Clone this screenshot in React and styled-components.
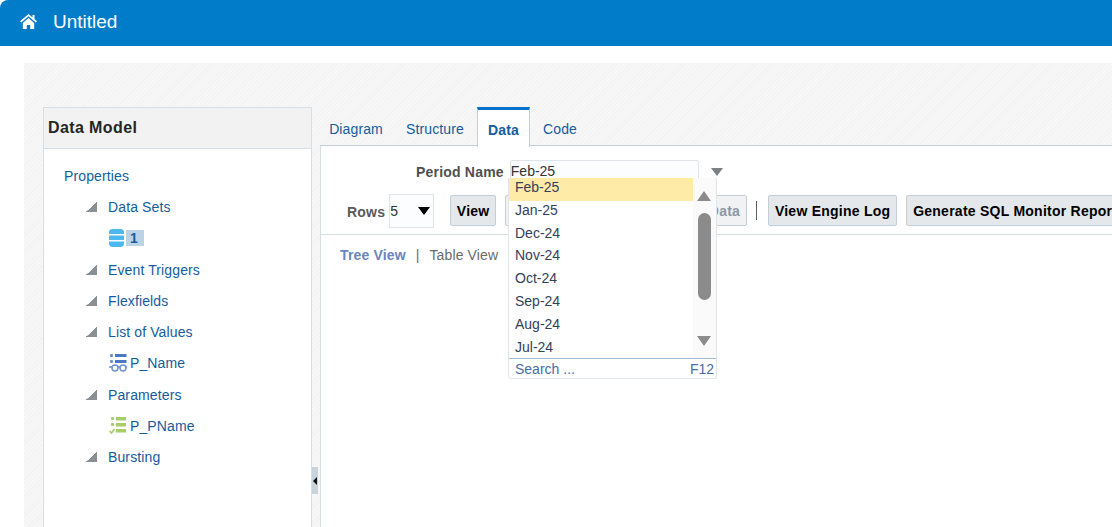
import React from 'react';
import styled, { createGlobalStyle } from 'styled-components';

const Global = createGlobalStyle`
  html, body { margin: 0; padding: 0; background: #fff; }
  body { font-family: "Liberation Sans", Arial, sans-serif; font-size: 14px; width: 1112px; height: 527px; overflow: hidden; }
  * { box-sizing: border-box; }
`;
const Page = styled.div`width: 1112px; height: 527px; overflow: hidden; display: flex; flex-direction: column;`;
const TopBar = styled.header`
  height: 46px; flex: none; background: #007cc8; border-top-left-radius: 8px;
  display: flex; align-items: center; padding: 0 0 3px 20px; gap: 16px; color: #fff;
`;
const Title = styled.span`font-size: 19px; line-height: 22px;`;
const Canvas = styled.div`flex: 1; min-height: 0; padding: 17px 0 0 24px;`;
const Hatched = styled.main`
  height: 100%; padding: 44px 0 0 19px; display: flex; align-items: stretch;
  background: repeating-linear-gradient(135deg, #f3f3f3 0 1px, #f7f7f7 1px 3px);
`;
const SidePanel = styled.aside`
  width: 269px; flex: none; background: #fff; border: 1px solid #d6dfe6; border-bottom: 0;
  display: flex; flex-direction: column;
`;
const SideHead = styled.h2`
  margin: 0; height: 41px; flex: none; background: #f2f2f2; border-bottom: 1px solid #d6dfe6;
  font-size: 16px; line-height: 39px; font-weight: 700; color: #252525; padding-left: 4px; letter-spacing: .4px;
`;
const Tree = styled.ul`margin: 0; padding: 12px 0 0 20px; list-style: none; display: flex; flex-direction: column;`;
const Node = styled.li`
  height: 31.25px; flex: none; display: flex; align-items: center; color: #145c9e; font-size: 14px; letter-spacing: .12px;
  padding-left: ${p => p.$level === 0 ? 0 : p.$level === 1 ? 44 : 45}px; position: relative;
  padding-bottom: ${p => p.$level === 1 ? 1.5 : 2}px;
`;
const Twisty = styled.span`
  position: absolute; left: 22px; top: 10px; width: 11px; height: 10px;
  background: linear-gradient(138deg, transparent 49%, #8a8f94 50%);
`;
const NodeIcon = styled.svg`width: ${p => p.$w || 18}px; height: 18px; flex: none; margin-right: ${p => p.$gap ?? 3}px;`;
const Selected = styled.span`
  background: #bcd3e6; font-weight: 700; color: #145c9e; width: 18px; height: 16px; line-height: 16px; padding-left: 4px;
  margin-top: -1px;
`;
const Splitter = styled.div`width: 8px; flex: none; display: flex; flex-direction: column; padding: 360px 0 0 0;`;
const SplitHandle = styled.div`
  width: 6px; height: 27px; background: #c9d3dc; display: flex; align-items: center; justify-content: center;
  &::before { content: ""; border-right: 4px solid #111; border-top: 4px solid transparent; border-bottom: 4px solid transparent; }
`;
const Workspace = styled.section`flex: 1; min-width: 0; display: flex; flex-direction: column; position: relative;`;
const Tabs = styled.nav`
  height: 39px; flex: none; display: flex; align-items: stretch; padding-left: 1px; border-bottom: 1px solid #c4ced7; position: relative;
`;
const Tab = styled.div`
  width: ${p => p.$w}px; padding-left: ${p => p.$pad || 0}px; text-align: center; font-size: 14px; line-height: 44px; color: #145c9e; letter-spacing: .12px;
  font-weight: ${p => p.$active ? 700 : 400};
  ${p => p.$active ? `
    background: #fff; border: 1px solid #c4ced7; border-top: 3px solid #0572ce; border-bottom: 0; height: 40px; line-height: 41px;
  ` : ''}
`;
const Content = styled.div`
  flex: 1; background: #fff; border-left: 1px solid #d6dfe6; display: flex; flex-direction: column; min-width: 0; overflow: hidden;
`;
const ParamRow = styled.div`height: 48px; flex: none; display: flex; align-items: flex-start; padding: 14px 0 0 95px;`;
const FieldLabel = styled.label`font-weight: 700; color: #4f4f4f; font-size: 14px; letter-spacing: .2px; line-height: 24px;`;
const PeriodInput = styled.div`
  width: 189px; height: 24px; margin-left: 6px; border: 1px solid #dfe4ea; border-radius: 2px; background: #fcfdfe;
  font-size: 14px; color: #333; line-height: 21px; padding-left: 0;
`;
const Caret = styled.span`
  margin: 8px 0 0 12px; width: 0; height: 0; border-left: 6px solid transparent; border-right: 6px solid transparent; border-top: 8px solid #7b8085;
`;
const Toolbar = styled.div`
  height: 41px; flex: none; display: flex; align-items: flex-start; padding-left: 26px; border-bottom: 1px solid #d6dfe6; white-space: nowrap;
`;
const RowsLabel = styled(FieldLabel)`line-height: 36px; margin-right: 4px; color: #5a5a5a; flex: none;`;
const RowsSelect = styled.div`
  width: 45px; height: 34px; flex: none; border: 1px solid #dfe4ea; background: #fcfdfe; font-size: 14px; color: #333; line-height: 33px; display: flex; justify-content: space-between; align-items: center; padding: 0 3px 0 0;
  margin-right: 16px;
  &::after { content: ""; border-left: 6px solid transparent; border-right: 6px solid transparent; border-top: 8px solid #000; }
`;
const Btn = styled.button`
  height: 31px; margin: 1px 0 0; width: ${p => p.$w}px; flex: none; border: 1px solid #c4ced7; border-radius: 2px; font-family: inherit;
  background: ${p => p.$off ? '#f1f2f3' : '#e4e8ea'}; color: ${p => p.$off ? '#8b98a5' : '#000'}; font-size: 14px; font-weight: 700; letter-spacing: .25px;
  text-align: ${p => p.$align || 'center'}; white-space: nowrap; overflow: hidden;
  padding: 0 ${p => p.$align === 'right' ? 6 : 0}px 0 ${p => p.$align === 'left' ? 6 : 0}px; margin-right: ${p => p.$gap || 0}px;
`;
const Divider = styled.span`width: 1px; height: 19px; background: #56616b; margin: 7px 11px 0 9px; flex: none;`;
const ViewSwitch = styled.div`padding: 12px 0 0 19px; font-size: 14px; display: flex; gap: 10px; line-height: 17px; color: #6a6a6a; letter-spacing: .12px;`;
const ViewOn = styled.span`font-weight: 700; color: #6b85bd; letter-spacing: .15px;`;
const Popup = styled.div`
  position: absolute; left: 188px; top: 71px; width: 209px; height: 201px; background: #fff; border: 1px solid #e0e5ea; border-top: 0; border-radius: 0 0 3px 3px;
  display: flex; flex-direction: column; overflow: hidden;
`;
const PopBody = styled.div`flex: 1; min-height: 0; display: flex;`;
const Options = styled.div`width: 184px; flex: none; display: flex; flex-direction: column; overflow: hidden;`;
const Option = styled.div`
  height: 22.8px; flex: none; line-height: 19px; padding-left: 6px; font-size: 14px; color: #33405a; background: ${p => p.$hi ? '#ffeba8' : 'transparent'};
`;
const ScrollCol = styled.div`flex: 1; background: #fafafa; position: relative;`;
const ScrollUp = styled.span`
  position: absolute; left: 4px; top: 13px; border-left: 7.5px solid transparent; border-right: 7.5px solid transparent; border-bottom: 10px solid #8b8b8b;
`;
const ScrollDown = styled.span`
  position: absolute; left: 4px; top: 158px; border-left: 7.5px solid transparent; border-right: 7.5px solid transparent; border-top: 10px solid #8b8b8b;
`;
const Thumb = styled.span`position: absolute; left: 5px; top: 35px; width: 13px; height: 87px; background: #8b8b8b; border-radius: 7px;`;
const PopFoot = styled.div`
  height: 20px; flex: none; border-top: 1px solid #a3b8d6; display: flex; justify-content: space-between; padding: 0 2px 0 6px; color: #4a6ca8; font-size: 14px; line-height: 20px;
`;

const Home = () => (
  <svg width="17" height="15" viewBox="0 0 17 15"><path fill="#fff" d="M8.5 0 L12.5 3.4V1h2v4.1L17 7.3l-1.2 1.3L8.5 2.3 1.2 8.6 0 7.3zM2.8 9l5.7-4.9L14.2 9v6h-4v-4H6.8v4h-4z"/></svg>
);
const DbIcon = () => (
  <NodeIcon viewBox="0 0 15 18" $w={15} $gap={2}>
    <path fill="#4db8ee" d="M0 3q0-3 4-3h7q4 0 4 3v2H0zM0 6.5h15V11H0zM0 12.5h15v2q0 3.5-4 3.5H4q-4 0-4-3.5z"/>
  </NodeIcon>
);
const LovIcon = () => (
  <NodeIcon viewBox="0 0 18 18">
    <g fill="#6d8fcb">
      <rect x="1" y="0" width="3" height="3" rx="1"/><rect x="1" y="6" width="3" height="3" rx="1"/>
    </g>
    <g fill="#4a78c4">
      <rect x="6" y="0" width="11.5" height="3"/><rect x="6" y="6" width="11.5" height="3"/>
    </g>
    <g fill="none" stroke="#6d8fcb" strokeWidth="1.4">
      <circle cx="6" cy="14" r="3"/><circle cx="14" cy="14" r="3"/><path d="M0 13h3M9 13h2M17 13h1"/>
    </g>
  </NodeIcon>
);
const ParamIcon = () => (
  <NodeIcon viewBox="0 0 18 18">
    <g fill="#a6cc6b">
      <rect x="2" y="0" width="3" height="3" rx="1"/><rect x="7" y="0" width="10" height="3.5"/>
      <rect x="2" y="6" width="3" height="3" rx="1"/><rect x="7" y="6" width="10" height="3.5"/>
      <rect x="7" y="12" width="10" height="3.5"/>
    </g>
    <path d="M0.5 14l2 2 3-4" fill="none" stroke="#a6cc6b" strokeWidth="1.6"/>
  </NodeIcon>
);

const months = ['Feb-25','Jan-25','Dec-24','Nov-24','Oct-24','Sep-24','Aug-24','Jul-24'];

export default function App() {
  return (
    <Page>
      <Global />
      <TopBar><Home /><Title>Untitled</Title></TopBar>
      <Canvas>
        <Hatched>
          <SidePanel>
            <SideHead>Data Model</SideHead>
            <Tree>
              <Node $level={0}>Properties</Node>
              <Node $level={1}><Twisty />Data Sets</Node>
              <Node $level={2}><DbIcon /><Selected>1</Selected></Node>
              <Node $level={1}><Twisty />Event Triggers</Node>
              <Node $level={1}><Twisty />Flexfields</Node>
              <Node $level={1}><Twisty />List of Values</Node>
              <Node $level={2}><LovIcon />P_Name</Node>
              <Node $level={1}><Twisty />Parameters</Node>
              <Node $level={2}><ParamIcon />P_PName</Node>
              <Node $level={1}><Twisty />Bursting</Node>
            </Tree>
          </SidePanel>
          <Splitter><SplitHandle /></Splitter>
          <Workspace>
            <Tabs>
              <Tab $w={70}>Diagram</Tab>
              <Tab $w={86} $pad={2}>Structure</Tab>
              <Tab $w={53} $active>Data</Tab>
              <Tab $w={60}>Code</Tab>
            </Tabs>
            <Content>
              <ParamRow>
                <FieldLabel>Period Name</FieldLabel>
                <PeriodInput>Feb-25</PeriodInput>
                <Caret />
              </ParamRow>
              <Toolbar>
                <RowsLabel>Rows</RowsLabel>
                <RowsSelect>5</RowsSelect>
                <Btn $w={46} $gap={9}>View</Btn>
                <Btn $w={242} $off $align="right">Save As Sample Data</Btn>
                <Divider />
                <Btn $w={129} $gap={9}>View Engine Log</Btn>
                <Btn $w={240} $align="left">Generate SQL Monitor Report</Btn>
              </Toolbar>
              <ViewSwitch>
                <ViewOn>Tree View</ViewOn><span>|</span><span>Table View</span>
              </ViewSwitch>
            </Content>
            <Popup>
              <PopBody>
                <Options>
                  {months.map((m, i) => <Option key={m} $hi={i === 0}>{m}</Option>)}
                </Options>
                <ScrollCol><ScrollUp /><Thumb /><ScrollDown /></ScrollCol>
              </PopBody>
              <PopFoot><span>Search ...</span><span>F12</span></PopFoot>
            </Popup>
          </Workspace>
        </Hatched>
      </Canvas>
    </Page>
  );
}
